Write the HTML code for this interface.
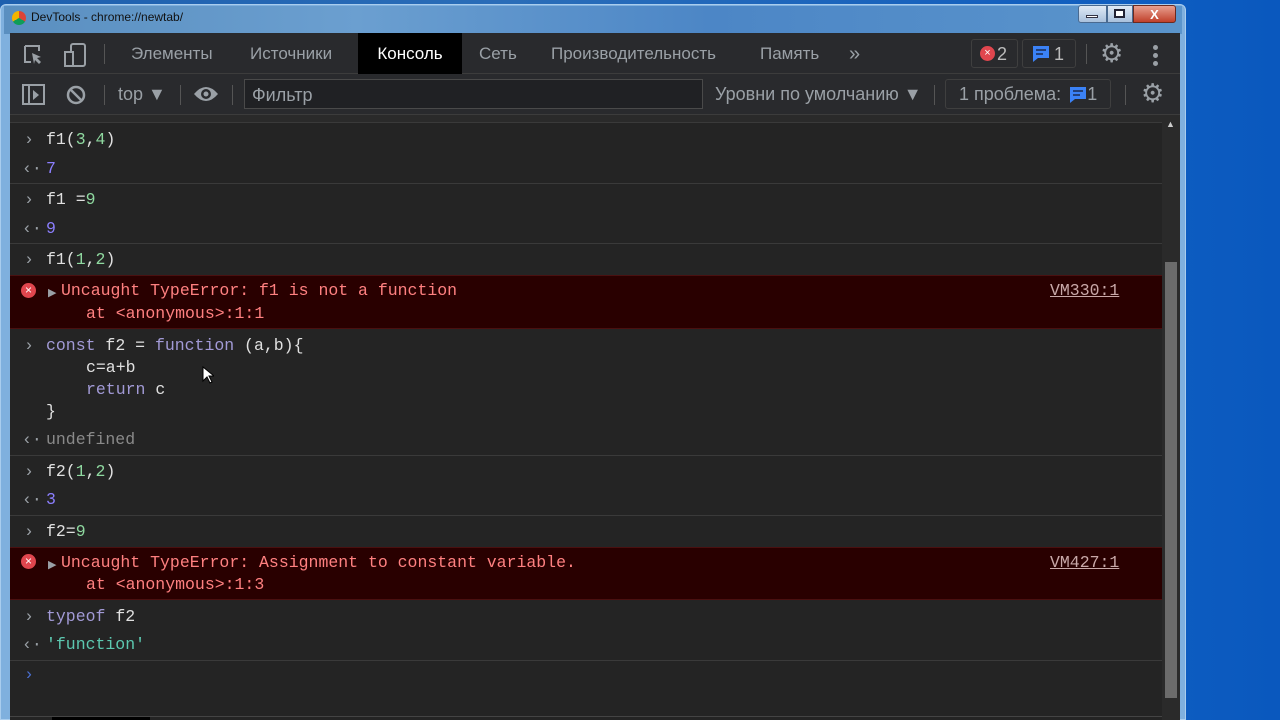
<!DOCTYPE html>
<html><head><meta charset="utf-8"><style>
*{margin:0;padding:0;box-sizing:border-box}
body{width:1280px;height:720px;overflow:hidden;background:linear-gradient(90deg,#1d5fae 0%,#2a6db8 40%,#0d5cc0 92%,#0a58be 100%);position:relative;font-family:"Liberation Sans",sans-serif}
.a{position:absolute}
.m{font-family:"Liberation Mono",monospace;font-size:16.5px;line-height:22px;color:#e0e0e0;white-space:pre;height:22px}
.p{color:#9aa0a6}
.n{color:#8fd9a0}
.o{color:#8c7fff}
.k{color:#a29ad6}
.e{color:#ff8080}
.tab{position:absolute;top:33px;height:41px;line-height:42px;font-size:17px;color:#9aa0a6}
</style></head><body>
<!-- window frame -->
<div class="a" style="left:0;top:4px;width:1186px;height:716px;background:#7fb0de;border:1px solid #a9cdee;border-radius:6px 6px 0 0"></div>
<div class="a" style="left:4px;top:6px;width:1178px;height:28px;background:linear-gradient(90deg,#5a8fc0,#6b9fd0 30%,#4c86c6 60%,#5b95cc)"></div>
<div class="a" style="left:12px;top:11px;width:14px;height:14px;border-radius:50%;background:conic-gradient(#db4437 0 120deg,#0f9d58 120deg 240deg,#f4b400 240deg)"></div>
<div class="a" style="left:31px;top:10px;font-size:12px;color:#111">DevTools - chrome://newtab/</div>
<div class="a" style="left:1078px;top:5px;width:29px;height:18px;background:linear-gradient(#dfe9f5,#a8c0dc);border:1px solid #4a6a90;border-radius:3px 0 0 3px"></div>
<div class="a" style="left:1086px;top:15px;width:12px;height:3px;background:#fff;border:1px solid #334"></div>
<div class="a" style="left:1107px;top:5px;width:26px;height:18px;background:linear-gradient(#dfe9f5,#a8c0dc);border:1px solid #4a6a90"></div>
<div class="a" style="left:1114px;top:9px;width:11px;height:9px;border:2px solid #223;background:#fff"></div>
<div class="a" style="left:1133px;top:5px;width:43px;height:18px;background:linear-gradient(#e8a090,#c0402a);border:1px solid #6a2a20;border-radius:0 3px 3px 0;color:#fff;font-weight:bold;font-size:13px;text-align:center;line-height:17px">X</div>
<!-- devtools -->
<div class="a" style="left:10px;top:33px;width:1170px;height:687px;background:#242424"></div>
<div class="a" style="left:10px;top:33px;width:1170px;height:41px;background:#292a2d;border-bottom:1px solid #3c3c3c"></div>
<div class="a" style="left:10px;top:74px;width:1170px;height:41px;background:#292a2d;border-bottom:1px solid #3c3c3c"></div>
<div class="a" style="left:10px;top:115px;width:1152px;height:8px;background:#2a2a2a;border-bottom:1px solid #3a3a3a"></div>
<!-- tab bar icons -->
<svg class="a" style="left:22px;top:43px" width="24" height="24" viewBox="0 0 24 24"><path d="M3 3h14v5M3 3v16h6" fill="none" stroke="#9aa0a6" stroke-width="2"/><path d="M10 10l9 4-4 1 4 4-2 2-4-4-1 4z" fill="#9aa0a6"/></svg>
<svg class="a" style="left:62px;top:42px" width="26" height="26" viewBox="0 0 26 26"><rect x="9" y="2" width="14" height="22" rx="2" fill="none" stroke="#9aa0a6" stroke-width="2"/><rect x="3" y="10" width="8" height="14" fill="#292a2d" stroke="#9aa0a6" stroke-width="2"/></svg>
<div class="a" style="left:104px;top:44px;width:1px;height:20px;background:#555"></div>
<div class="tab" style="left:131px">Элементы</div>
<div class="tab" style="left:250px">Источники</div>
<div class="tab" style="left:358px;width:104px;background:#000;color:#fff;text-align:center">Консоль</div>
<div class="tab" style="left:479px">Сеть</div>
<div class="tab" style="left:551px">Производительность</div>
<div class="tab" style="left:760px">Память</div>
<div class="tab" style="left:849px;font-size:20px">»</div>
<div class="a" style="left:971px;top:39px;width:47px;height:29px;border:1px solid #3f3f3f;border-radius:3px"></div>
<div class="a" style="left:980px;top:46px;width:15px;height:15px;border-radius:50%;background:#e0464e;color:#fff;font-size:11px;text-align:center;line-height:15px">×</div>
<div class="a" style="left:997px;top:44px;font-size:18px;color:#bbb">2</div>
<div class="a" style="left:1022px;top:39px;width:54px;height:29px;border:1px solid #3f3f3f;border-radius:3px"></div>
<svg class="a" style="left:1032px;top:45px" width="18" height="18" viewBox="0 0 18 18"><path d="M1 1h16v12H6l-5 4z" fill="#3b82f6"/><path d="M4 5h10M4 9h7" stroke="#1a2a50" stroke-width="1.5"/></svg>
<div class="a" style="left:1054px;top:44px;font-size:18px;color:#bbb">1</div>
<div class="a" style="left:1086px;top:44px;width:1px;height:20px;background:#555"></div>
<div class="a" style="left:1100px;top:38px;font-size:26px;color:#9aa0a6">⚙</div>
<div class="a" style="left:1153px;top:45px;width:5px;height:5px;border-radius:50%;background:#9aa0a6;box-shadow:0 8px 0 #9aa0a6,0 16px 0 #9aa0a6"></div>
<!-- toolbar -->
<svg class="a" style="left:22px;top:84px" width="24" height="22" viewBox="0 0 24 22"><rect x="1" y="1" width="21" height="19" fill="none" stroke="#9aa0a6" stroke-width="2"/><path d="M7 1v19" stroke="#9aa0a6" stroke-width="2"/><path d="M11 6l6 5-6 5z" fill="#9aa0a6"/></svg>
<svg class="a" style="left:66px;top:85px" width="20" height="20" viewBox="0 0 20 20"><circle cx="10" cy="10" r="8" fill="none" stroke="#9aa0a6" stroke-width="2.5"/><path d="M4.5 4.5l11 11" stroke="#9aa0a6" stroke-width="2.5"/></svg>
<div class="a" style="left:104px;top:85px;width:1px;height:20px;background:#555"></div>
<div class="a" style="left:118px;top:84px;font-size:18px;color:#9aa0a6">top ▼</div>
<div class="a" style="left:180px;top:85px;width:1px;height:20px;background:#555"></div>
<svg class="a" style="left:193px;top:84px" width="26" height="20" viewBox="0 0 26 20"><path d="M1 10Q13-4 25 10Q13 24 1 10z" fill="#9aa0a6"/><circle cx="13" cy="10" r="5" fill="#292a2d"/><circle cx="13" cy="10" r="2.5" fill="#9aa0a6"/></svg>
<div class="a" style="left:232px;top:85px;width:1px;height:20px;background:#555"></div>
<div class="a" style="left:244px;top:79px;width:459px;height:30px;border:1px solid #4a4a4a;background:#202124;font-size:18px;color:#9aa0a6;line-height:30px;padding-left:7px">Фильтр</div>
<div class="a" style="left:715px;top:84px;font-size:18px;color:#9aa0a6">Уровни по умолчанию ▼</div>
<div class="a" style="left:934px;top:85px;width:1px;height:20px;background:#555"></div>
<div class="a" style="left:945px;top:79px;width:166px;height:30px;border:1px solid #3f3f3f;border-radius:3px;font-size:18px;color:#9aa0a6;line-height:29px;padding-left:13px">1 проблема: <span style="display:inline-block;width:16px"></span> 1</div>
<svg class="a" style="left:1069px;top:86px" width="18" height="18" viewBox="0 0 18 18"><path d="M1 1h16v12H6l-5 4z" fill="#3b82f6"/><path d="M4 5h10M4 9h7" stroke="#1a2a50" stroke-width="1.5"/></svg>
<div class="a" style="left:1125px;top:85px;width:1px;height:20px;background:#555"></div>
<div class="a" style="left:1141px;top:78px;font-size:26px;color:#9aa0a6">⚙</div>
<!-- scrollbar -->
<div class="a" style="left:1162px;top:115px;width:18px;height:605px;background:#2a2a2a"></div>
<div class="a" style="left:1165px;top:262px;width:12px;height:436px;background:#6b6b6b"></div>
<div class="a" style="left:1166px;top:119px;color:#ccc;font-size:9px">▲</div>
<!-- dividers -->
<div class="a" style="left:10px;top:183px;width:1152px;height:1px;background:#3a3a3a"></div>
<div class="a" style="left:10px;top:243px;width:1152px;height:1px;background:#3a3a3a"></div>
<div class="a" style="left:10px;top:455px;width:1152px;height:1px;background:#3a3a3a"></div>
<div class="a" style="left:10px;top:515px;width:1152px;height:1px;background:#3a3a3a"></div>
<div class="a" style="left:10px;top:660px;width:1152px;height:1px;background:#3a3a3a"></div>
<div class="a" style="left:10px;top:275px;width:1152px;height:54px;background:#290000;border-top:1px solid #4a1010;border-bottom:1px solid #4a1010"></div>
<div class="a" style="left:10px;top:547px;width:1152px;height:53px;background:#290000;border-top:1px solid #4a1010;border-bottom:1px solid #4a1010"></div>
<!-- console lines -->
<div class="a m p" style="left:24px;top:129px">›</div><div class="a m" style="left:46px;top:129px">f1(<span class="n">3</span>,<span class="n">4</span>)</div>
<div class="a m p" style="left:22px;top:158px">‹·</div><div class="a m o" style="left:46px;top:158px">7</div>
<div class="a m p" style="left:24px;top:189px">›</div><div class="a m" style="left:46px;top:189px">f1 =<span class="n">9</span></div>
<div class="a m p" style="left:22px;top:218px">‹·</div><div class="a m o" style="left:46px;top:218px">9</div>
<div class="a m p" style="left:24px;top:249px">›</div><div class="a m" style="left:46px;top:249px">f1(<span class="n">1</span>,<span class="n">2</span>)</div>
<div class="a" style="left:21px;top:283px;width:15px;height:15px;border-radius:50%;background:#e0464e;color:#fff;font-size:12px;text-align:center;line-height:15px">×</div>
<div class="a" style="left:48px;top:286px;color:#9aa0a6;font-size:11px">▶</div>
<div class="a m e" style="left:61px;top:280px">Uncaught TypeError: f1 is not a function</div>
<div class="a m e" style="left:86px;top:303px">at &lt;anonymous&gt;:1:1</div>
<div class="a m" style="left:1050px;top:280px;color:#c8a8a8;text-decoration:underline">VM330:1</div>
<div class="a m p" style="left:24px;top:335px">›</div><div class="a m" style="left:46px;top:335px"><span class="k">const</span> f2 = <span class="k">function</span> (a,b){</div>
<div class="a m" style="left:86px;top:357px">c=a+b</div>
<div class="a m" style="left:86px;top:379px"><span class="k">return</span> c</div>
<div class="a m" style="left:46px;top:401px">}</div>
<div class="a m p" style="left:22px;top:429px">‹·</div><div class="a m" style="left:46px;top:429px;color:#8a8a8a">undefined</div>
<div class="a m p" style="left:24px;top:461px">›</div><div class="a m" style="left:46px;top:461px">f2(<span class="n">1</span>,<span class="n">2</span>)</div>
<div class="a m p" style="left:22px;top:489px">‹·</div><div class="a m o" style="left:46px;top:489px">3</div>
<div class="a m p" style="left:24px;top:521px">›</div><div class="a m" style="left:46px;top:521px">f2=<span class="n">9</span></div>
<div class="a" style="left:21px;top:554px;width:15px;height:15px;border-radius:50%;background:#e0464e;color:#fff;font-size:12px;text-align:center;line-height:15px">×</div>
<div class="a" style="left:48px;top:558px;color:#9aa0a6;font-size:11px">▶</div>
<div class="a m e" style="left:61px;top:552px">Uncaught TypeError: Assignment to constant variable.</div>
<div class="a m e" style="left:86px;top:574px">at &lt;anonymous&gt;:1:3</div>
<div class="a m" style="left:1050px;top:552px;color:#c8a8a8;text-decoration:underline">VM427:1</div>
<div class="a m p" style="left:24px;top:606px">›</div><div class="a m" style="left:46px;top:606px"><span class="k">typeof</span> f2</div>
<div class="a m p" style="left:22px;top:634px">‹·</div><div class="a m" style="left:46px;top:634px;color:#5cc8b0">'function'</div>
<div class="a m" style="left:24px;top:664px;color:#4a6fd0">›</div>
<div class="a" style="left:10px;top:716px;width:1152px;height:1px;background:#444"></div>
<div class="a" style="left:52px;top:717px;width:98px;height:3px;background:#000"></div>
<!-- cursor -->
<svg class="a" style="left:202px;top:366px" width="12" height="18" viewBox="0 0 12 18"><path d="M1 1v14l4-4 3 6 2-1-3-6h5z" fill="#fff" stroke="#000"/></svg>
</body></html>
